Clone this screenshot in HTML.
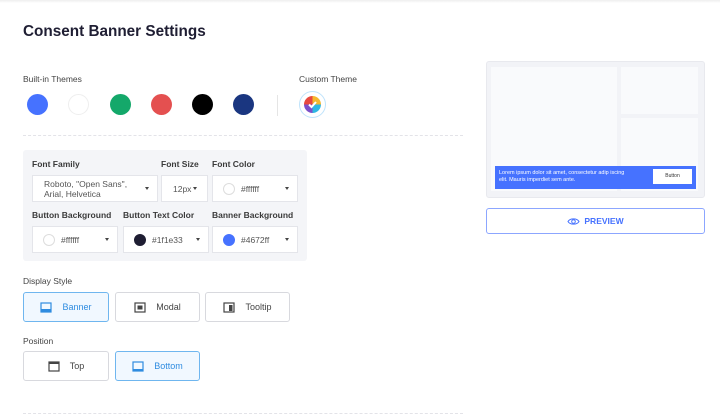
<!DOCTYPE html>
<html><head><style>
*{box-sizing:border-box;margin:0;padding:0}
body{width:720px;height:417px;background:#fff;font-family:"Liberation Sans",sans-serif;color:#1f1e33;position:relative;overflow:hidden}
.a{position:absolute}
.top{left:0;top:0;width:720px;height:3px;background:linear-gradient(#eee,#fff)}
h1{position:absolute;left:23px;top:23px;font-size:15.3px;font-weight:bold;color:#1f1e33}
.lbl{position:absolute;font-size:8.5px;color:#444}
.c{position:absolute;width:21px;height:21px;border-radius:50%;top:94px}
.dash{position:absolute;left:23px;width:440px;border-top:1px dashed #e3e3e8}
.box{left:23px;top:150px;width:284px;height:111px;background:#f4f5f8;border-radius:3px}
.fl{position:absolute;font-size:8.5px;font-weight:bold;color:#3a3a3a}
.in{position:absolute;background:#fff;border:1px solid #e4e5ea;font-size:8.5px;color:#555;display:flex;align-items:center}
.arr{position:absolute;right:8px;top:50%;margin-top:-2px;border-left:2.5px solid transparent;border-right:2.5px solid transparent;border-top:3px solid #444}
.dot{width:12px;height:12px;border-radius:50%;margin:0 6px 0 10px;border:1px solid #ddd}
.btn{position:absolute;height:30px;border:1px solid #d8d9de;border-radius:3px;font-size:9px;color:#444;display:flex;align-items:center;justify-content:center;gap:10px;background:#fff}
.btn.on{border-color:#6fb6ef;background:#f1f8ff;color:#2f8ce0}
</style></head><body>
<div class="a top"></div>
<h1>Consent Banner Settings</h1>
<div class="lbl" style="left:23px;top:74px">Built-in Themes</div>
<div class="lbl" style="left:299px;top:74px">Custom Theme</div>
<div class="c" style="left:27px;background:#4672ff"></div>
<div class="c" style="left:68px;background:#fff;border:1px solid #eee"></div>
<div class="c" style="left:110px;background:#14a86a"></div>
<div class="c" style="left:151px;background:#e45050"></div>
<div class="c" style="left:192px;background:#000"></div>
<div class="c" style="left:233px;background:#1a3680"></div>
<div class="a" style="left:277px;top:95px;width:1px;height:21px;background:#e5e5e5"></div>
<div class="a" style="left:299px;top:91px;width:27px;height:27px;border-radius:50%;border:1px solid #bfe3fb;background:#fff"></div>
<div class="a" style="left:304px;top:96px;width:17px;height:17px;border-radius:50%;background:conic-gradient(#f5b82e 0 90deg,#2fb7e3 90deg 180deg,#7b4fc9 180deg 270deg,#e8483f 270deg)"></div>
<svg class="a" style="left:306px;top:98px" width="13" height="13" viewBox="0 0 13 13"><path d="M3 6.5l2.5 2.5 4.5-5" stroke="#fff" stroke-width="2" fill="none"/></svg>
<div class="dash" style="top:135px"></div>
<div class="a box"></div>
<div class="fl" style="left:32px;top:159px">Font Family</div>
<div class="fl" style="left:161px;top:159px">Font Size</div>
<div class="fl" style="left:212px;top:159px">Font Color</div>
<div class="in" style="left:32px;top:175px;width:126px;height:27px;padding-left:11px;line-height:10px">Roboto, "Open Sans",<br>Arial, Helvetica<span class="arr"></span></div>
<div class="in" style="left:161px;top:175px;width:47px;height:27px;padding-left:11px">12px<span class="arr" style="right:10px"></span></div>
<div class="in" style="left:212px;top:175px;width:86px;height:27px"><span class="dot" style="background:#fff"></span>#ffffff<span class="arr"></span></div>
<div class="fl" style="left:32px;top:210px">Button Background</div>
<div class="fl" style="left:123px;top:210px">Button Text Color</div>
<div class="fl" style="left:212px;top:210px">Banner Background</div>
<div class="in" style="left:32px;top:226px;width:86px;height:27px"><span class="dot" style="background:#fff"></span>#ffffff<span class="arr"></span></div>
<div class="in" style="left:123px;top:226px;width:86px;height:27px"><span class="dot" style="background:#1f1e33;border-color:#1f1e33"></span>#1f1e33<span class="arr"></span></div>
<div class="in" style="left:212px;top:226px;width:86px;height:27px"><span class="dot" style="background:#4672ff;border-color:#4672ff"></span>#4672ff<span class="arr"></span></div>
<div class="lbl" style="left:23px;top:276px">Display Style</div>
<div class="btn on" style="left:23px;top:292px;width:86px"><svg width="12" height="11"><rect x="1" y="1" width="10" height="9" fill="none" stroke="#2f8ce0" stroke-width="1.2"/><rect x="1" y="7" width="10" height="3" fill="#2f8ce0"/></svg>Banner</div>
<div class="btn" style="left:115px;top:292px;width:85px"><svg width="12" height="11"><rect x="1" y="1" width="10" height="9" fill="none" stroke="#444" stroke-width="1.2"/><rect x="3.5" y="3.5" width="5" height="4" fill="#444"/></svg>Modal</div>
<div class="btn" style="left:205px;top:292px;width:85px"><svg width="12" height="11"><rect x="1" y="1" width="10" height="9" fill="none" stroke="#444" stroke-width="1.2"/><rect x="6" y="3" width="3.5" height="6" fill="#444"/></svg>Tooltip</div>
<div class="lbl" style="left:23px;top:336px">Position</div>
<div class="btn" style="left:23px;top:351px;width:86px"><svg width="12" height="11"><rect x="1" y="1" width="10" height="9" fill="none" stroke="#444" stroke-width="1.2"/><rect x="1" y="1" width="10" height="2" fill="#444"/></svg>Top</div>
<div class="btn on" style="left:115px;top:351px;width:85px"><svg width="12" height="11"><rect x="1" y="1" width="10" height="9" fill="none" stroke="#2f8ce0" stroke-width="1.2"/><rect x="1" y="8" width="10" height="2" fill="#2f8ce0"/></svg>Bottom</div>
<div class="dash" style="top:413px"></div>
<div class="a" style="left:486px;top:61px;width:219px;height:137px;background:#f2f3f7;border:1px solid #e8e9ee;border-radius:3px"></div>
<div class="a" style="left:491px;top:67px;width:126px;height:124px;background:#f9fafc"></div>
<div class="a" style="left:621px;top:67px;width:77px;height:47px;background:#f9fafc"></div>
<div class="a" style="left:621px;top:118px;width:77px;height:73px;background:#f9fafc"></div>
<div class="a" style="left:495px;top:166px;width:201px;height:23px;background:#4672ff;color:#fff;font-size:5.5px;padding:4px 0 0 4px;line-height:7px">Lorem ipsum dolor sit amet, consectetur adip iscing<br>elit. Mauris imperdiet sem ante.</div>
<div class="a" style="left:653px;top:169px;width:39px;height:15px;background:#fff;font-size:5px;color:#333;text-align:center;line-height:15px">Button</div>
<div class="a" style="left:486px;top:208px;width:219px;height:26px;border:1px solid #8ca6ff;border-radius:3px;color:#4672ff;font-size:8.5px;font-weight:bold;display:flex;align-items:center;justify-content:center;gap:4px"><svg width="13" height="9" viewBox="0 0 13 9"><path d="M1 4.5C3 1 10 1 12 4.5 10 8 3 8 1 4.5z" fill="none" stroke="#4672ff" stroke-width="1"/><circle cx="6.5" cy="4.5" r="1.8" fill="none" stroke="#4672ff"/></svg>PREVIEW</div>
</body></html>
